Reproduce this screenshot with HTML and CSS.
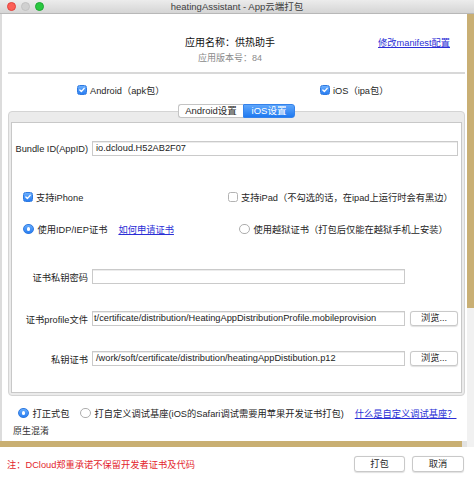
FILE: index.html
```html
<!DOCTYPE html>
<html lang="zh-CN">
<head>
<meta charset="utf-8">
<title>heatingAssistant - App云端打包</title>
<link rel="stylesheet" href="styles.css">
</head>
<body>
<div class="window">
  <div class="titlebar">
    <div class="lights"><span class="light red"></span><span class="light grey"></span><span class="light green"></span></div>
    <div class="title">heatingAssistant - App云端打包</div>
    <div></div>
  </div>
  <div class="scrollview">
    <div class="content">
      <div class="header">
        <div></div>
        <div class="appinfo">
          <div class="appname">应用名称：供热助手</div>
          <div class="appver">应用版本号：84</div>
        </div>
        <div class="manifest"><a class="link">修改manifest配置</a></div>
      </div>
      <div class="sep"></div>
      <div class="platforms">
        <label class="opt"><span class="cb on"><svg viewBox="0 0 10 10"><path d="M2.3 5.1 L4.2 7 L7.7 2.9"/></svg></span>Android（apk包）</label>
        <label class="opt"><span class="cb on"><svg viewBox="0 0 10 10"><path d="M2.3 5.1 L4.2 7 L7.7 2.9"/></svg></span>iOS（ipa包）</label>
      </div>
      <div class="tabs">
        <span class="tab android">Android设置</span><span class="tab ios">iOS设置</span>
      </div>
      <div class="group">
        <div class="panel">
          <div class="field">
            <span class="label">Bundle ID(AppID)</span>
            <span class="input">io.dcloud.H52AB2F07</span>
          </div>
          <div class="optrow devices">
            <label class="opt"><span class="cb on"><svg viewBox="0 0 10 10"><path d="M2.3 5.1 L4.2 7 L7.7 2.9"/></svg></span>支持iPhone</label>
            <label class="opt"><span class="cb off"></span>支持iPad（不勾选的话，在ipad上运行时会有黑边）</label>
          </div>
          <div class="optrow certs">
            <label class="opt"><span class="rb on"></span>使用IDP/IEP证书<a class="link help">如何申请证书</a></label>
            <label class="opt"><span class="rb off"></span>使用越狱证书（打包后仅能在越狱手机上安装）</label>
          </div>
          <div class="field pwd">
            <span class="label">证书私钥密码</span>
            <span class="input fixed"></span>
          </div>
          <div class="field profile">
            <span class="label">证书profile文件</span>
            <span class="input fixed scrolled">t/certificate/distribution/HeatingAppDistributionProfile.mobileprovision</span>
            <span class="btn">浏览...</span>
          </div>
          <div class="field key">
            <span class="label">私钥证书</span>
            <span class="input fixed">/work/soft/certificate/distribution/heatingAppDistibution.p12</span>
            <span class="btn">浏览...</span>
          </div>
        </div>
      </div>
      <div class="optrow buildtype">
        <label class="opt"><span class="rb on"></span>打正式包</label>
        <label class="opt"><span class="rb off"></span>打自定义调试基座(iOS的Safari调试需要用苹果开发证书打包)<a class="link help">什么是自定义调试基座？</a></label>
      </div>
      <div class="obf">原生混淆</div>
    </div>
    <div class="vbar"></div>
  </div>
  <div class="footer">
    <span class="note">注：DCloud郑重承诺不保留开发者证书及代码</span>
    <div class="actions">
      <span class="btn big pack">打包</span>
      <span class="btn big cancel">取消</span>
    </div>
  </div>
</div>
</body>
</html>
```

FILE: styles.css
```css
* { box-sizing: border-box; margin: 0; padding: 0; }
html, body { width: 474px; height: 480px; overflow: hidden; background: #fff; }
body {
  font-family: "Liberation Sans", "Noto Sans CJK SC", sans-serif;
  font-size: 9.25px;
  color: #262626;
}
.window { width: 474px; height: 480px; display: flex; flex-direction: column; }

/* title bar */
.titlebar {
  height: 14px; flex: none;
  display: grid; grid-template-columns: 1fr auto 1fr; align-items: center;
  background: linear-gradient(#ececec, #d5d5d5);
  border-bottom: 1px solid #b8b8b8;
}
.lights { display: flex; gap: 5px; padding-left: 7px; }
.light { width: 9px; height: 9px; border-radius: 50%; display: block; }
.light.red { background: #fc5f57; border: 0.5px solid #e1443e; }
.light.grey { background: #d0d0d0; border: 0.5px solid #c2c2c2; }
.light.green { background: #2ac840; border: 0.5px solid #1ea834; }
.title { font-size: 9.5px; color: #404040; line-height: 13px; white-space: nowrap; }

/* scroll view: content with tan horizontal scroller along its bottom edge, tan vertical scroller at right */
.scrollview { flex: none; height: 433px; display: flex; background: #f1f1f1; }
.content {
  flex: none; width: 467px; height: 433px; overflow: hidden;
  border-bottom: 6px solid transparent;
  background: #fff linear-gradient(to right, #c9af72 0, #c9af72 462px, #e2e2e2 462px) left bottom / 100% 6px no-repeat;
  background-origin: border-box;
  background-clip: border-box;
  box-shadow: inset 2px 0 #dcdcdc;
}
.vbar { flex: none; width: 7px; height: 427px; background: linear-gradient(#c9af74 0, #c9af74 294px, #f1f1f1 294px); }

/* header */
.header {
  height: 58px;
  display: grid; grid-template-columns: 1fr auto 1fr;
  padding: 22px 7px 0 0;
}
.appinfo { text-align: center; }
.appname { font-size: 10px; line-height: 14px; color: #111; }
.appver { font-size: 9px; line-height: 14px; color: #8a8a8a; margin-top: 1px; }
.manifest { justify-self: end; padding-right: 10px; line-height: 14px; }
.link { color: #2b2fd6; text-decoration: underline; white-space: nowrap; }
.sep { height: 2px; background: #d8d8d8; margin: 0 2px 0 8px; }

/* options */
.opt { display: flex; align-items: center; white-space: nowrap; flex: none; }
.cb {
  width: 10px; height: 10px; border-radius: 2.5px; margin-right: 3px; flex: none;
  display: flex;
}
.cb.on { background: linear-gradient(#6aaefd, #2a7ef2); border: 1px solid #2f7ae0; }
.cb.on svg { width: 8px; height: 8px; }
.cb.on path { fill: none; stroke: #fff; stroke-width: 1.7; stroke-linecap: round; stroke-linejoin: round; }
.cb.off { background: #fff; border: 1px solid #b3b3b3; }
.rb {
  width: 10.5px; height: 10.5px; border-radius: 50%; margin-right: 4px; flex: none;
  display: flex; align-items: center; justify-content: center;
}
.rb.on { background: linear-gradient(#64aafc, #2a7ef2); border: 1px solid #2f7ae0; }
.rb.on::after { content: ""; width: 3.5px; height: 3.5px; border-radius: 50%; background: #fff; }
.rb.off { background: #fff; border: 1px solid #aeaeae; }

.platforms { display: flex; align-items: center; height: 15px; margin-top: 8px; padding-left: 77px; }
.platforms .opt:first-child { width: 243px; }

/* tabs */
.tabs { display: flex; justify-content: center; height: 14px; margin-top: 7px; padding-left: 6px; position: relative; z-index: 1; }
.tab { height: 14px; line-height: 12px; text-align: center; border: 1px solid #c4c4c4; font-size: 9.5px; }
.tab.android { width: 65px; background: #fff; border-right: none; border-radius: 3px 0 0 3px; color: #2a2a2a; }
.tab.ios { width: 52px; background: linear-gradient(#5ea6fb, #1f79f0); border-color: #3582ea; border-radius: 0 3px 3px 0; color: #fff; }

/* group */
.group {
  margin: -7px 2px 0 8px;
  background: #ebebeb;
  border: 1px solid #d4d4d4;
  border-radius: 4px;
  padding: 10px 2px 2px 2px;
}
.panel { background: #fff; border: 1px solid #c8c8c8; padding: 18px 3px 26px 3px; }
.field { display: flex; align-items: center; height: 15px; }
.label { width: 73px; text-align: right; margin-right: 4px; flex: none; white-space: nowrap; }
.input {
  flex: 1; height: 15px; line-height: 13px; padding: 0 3px;
  border: 1px solid #cacaca; box-shadow: inset 0 1px 0 #ececec;
  white-space: nowrap; overflow: hidden; color: #222;
}
.input.fixed { flex: none; width: 313px; }
.input.scrolled { padding-left: 1px; }
.btn {
  flex: none; width: 48px; height: 15px; margin-left: 5px; line-height: 13px;
  text-align: center; background: #fff; border: 1px solid #c9c9c9; border-radius: 3px;
  box-shadow: 0 0.5px 1px rgba(0,0,0,0.12); color: #2a2a2a;
}
.optrow { display: flex; align-items: center; height: 14px; padding-left: 8px; }
.devices { margin-top: 34px; }
.devices .opt:first-child { width: 205px; }
.certs { margin-top: 18px; }
.certs .opt:first-child { width: 216px; }
.help { margin-left: 11px; }
.pwd { margin-top: 33px; }
.profile { margin-top: 27px; }
.key { margin-top: 25px; }

/* below the group */
.buildtype { margin-top: 10px; padding-left: 18px; }
.buildtype .opt:first-child { width: 62px; }
.obf { margin-top: 4px; height: 14px; line-height: 14px; padding-left: 13px; font-size: 9px; color: #333; }

/* footer */
.footer { height: 33px; flex: none; display: flex; align-items: center; padding: 0 10px 0 7px; }
.note { color: #e3252c; white-space: nowrap; }
.actions { margin-left: auto; display: flex; gap: 7px; }
.btn.big { height: 16px; line-height: 14px; margin-left: 0; }
.btn.pack { width: 51px; }
.btn.cancel { width: 52px; }
```
